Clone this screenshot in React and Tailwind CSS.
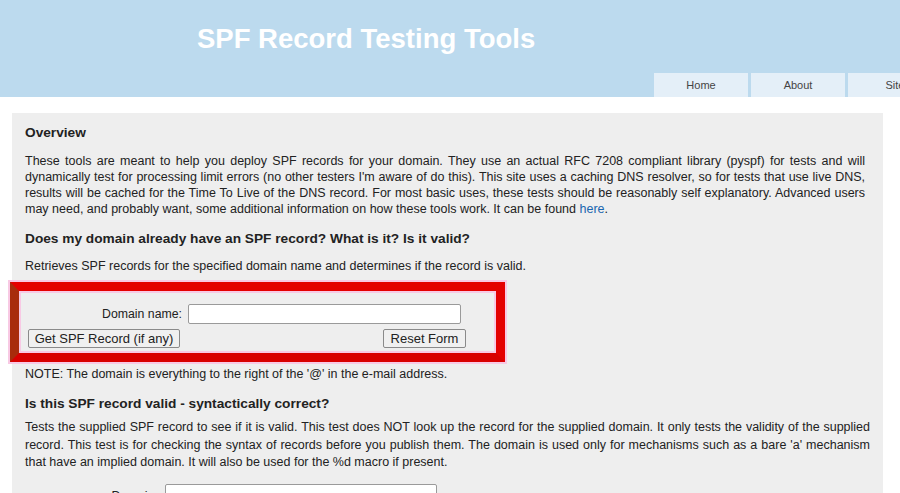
export default function App() {
  return (
    <div className="w-[900px] h-[493px] overflow-hidden bg-white font-['Liberation_Sans',Arial,sans-serif] text-[#222]">
      <header className="h-[97px] bg-[#bcdaee] flex flex-col justify-between overflow-hidden">
        <h1 className="pl-[197px] pt-[23px] text-[27.5px] leading-[32px] font-bold text-white">
          SPF Record Testing Tools
        </h1>
        <nav className="flex gap-[3px] pl-[654px] whitespace-nowrap">
          {["Home", "About", "Site"].map((t) => (
            <div
              key={t}
              className="w-[94px] h-[24px] shrink-0 bg-[#e4eff8] text-[11px] text-[#444] flex items-center justify-center"
            >
              {t}
            </div>
          ))}
        </nav>
      </header>

      <main className="mt-[16px] ml-[12px] w-[871px] bg-[#eeeeee] pl-[13px] pr-[13px] pt-[12px] pb-[20px]">
        <h2 className="text-[13.7px] leading-[16px] font-bold">Overview</h2>
        <p className="mt-[12px] pr-[5px] text-[12.5px] leading-[16px] text-justify">
          These tools are meant to help you deploy SPF records for your domain. They use an actual RFC 7208
          compliant library (pyspf) for tests and will dynamically test for processing limit errors (no other
          testers I'm aware of do this). This site uses a caching DNS resolver, so for tests that use live DNS,
          results will be cached for the Time To Live of the DNS record. For most basic uses, these tests should
          be reasonably self explanatory. Advanced users may need, and probably want, some additional information
          on how these tools work. It can be found <span className="text-[#1a66b0]">here</span>.
        </p>

        <h2 className="mt-[14px] text-[13.7px] leading-[16px] font-bold">
          Does my domain already have an SPF record? What is it? Is it valid?
        </h2>
        <p className="mt-[11px] text-[12.5px] leading-[16px]">
          Retrieves SPF records for the specified domain name and determines if the record is valid.
        </p>

        <div className="mt-[6px] ml-[-17px] w-[499px] border-2 border-[#f8c9e4]">
          <div className="border-[9px] border-[#e40000] border-l-[#a82c0c] border-b-[#d80000]">
            <div className="border-2 border-[#f8c9e4] bg-[#eeeeee] h-[62px] pl-[7px] pt-[11px]">
              <div className="flex items-center">
                <label className="w-[154px] text-right text-[12.3px] leading-[20px]">Domain name:</label>
                <input
                  type="text"
                  className="ml-[6px] w-[273px] h-[20px] bg-white border border-[#9a9a9a] rounded-[2px]"
                />
              </div>
              <div className="mt-[5px] w-[438px] flex justify-between">
                <button className="w-[152px] h-[19px] bg-[#f0f0f0] border border-[#8a8a8a] rounded-[2px] text-[13px] leading-[17px] text-[#222]">
                  Get SPF Record (if any)
                </button>
                <button className="w-[83px] h-[19px] bg-[#f0f0f0] border border-[#8a8a8a] rounded-[2px] text-[13px] leading-[17px] text-[#222]">
                  Reset Form
                </button>
              </div>
            </div>
          </div>
        </div>

        <p className="mt-[2px] text-[12.5px] leading-[16px]">
          NOTE: The domain is everything to the right of the '@' in the e-mail address.
        </p>

        <h2 className="mt-[14px] text-[13.7px] leading-[16px] font-bold">
          Is this SPF record valid - syntactically correct?
        </h2>
        <p className="mt-[7px] text-[12.5px] leading-[17.5px] text-justify">
          Tests the supplied SPF record to see if it is valid. This test does NOT look up the record for the
          supplied domain. It only tests the validity of the supplied record. This test is for checking the syntax
          of records before you publish them. The domain is used only for mechanisms such as a bare 'a' mechanism
          that have an implied domain. It will also be used for the %d macro if present.
        </p>

        <div className="mt-[12px] flex items-start">
          <label className="w-[133px] text-right text-[12.5px] leading-[20px] pt-[2px]">Domain:</label>
          <input
            type="text"
            className="ml-[7px] w-[272px] h-[20px] bg-white border border-[#9a9a9a] rounded-[2px]"
          />
        </div>
      </main>
    </div>
  );
}
